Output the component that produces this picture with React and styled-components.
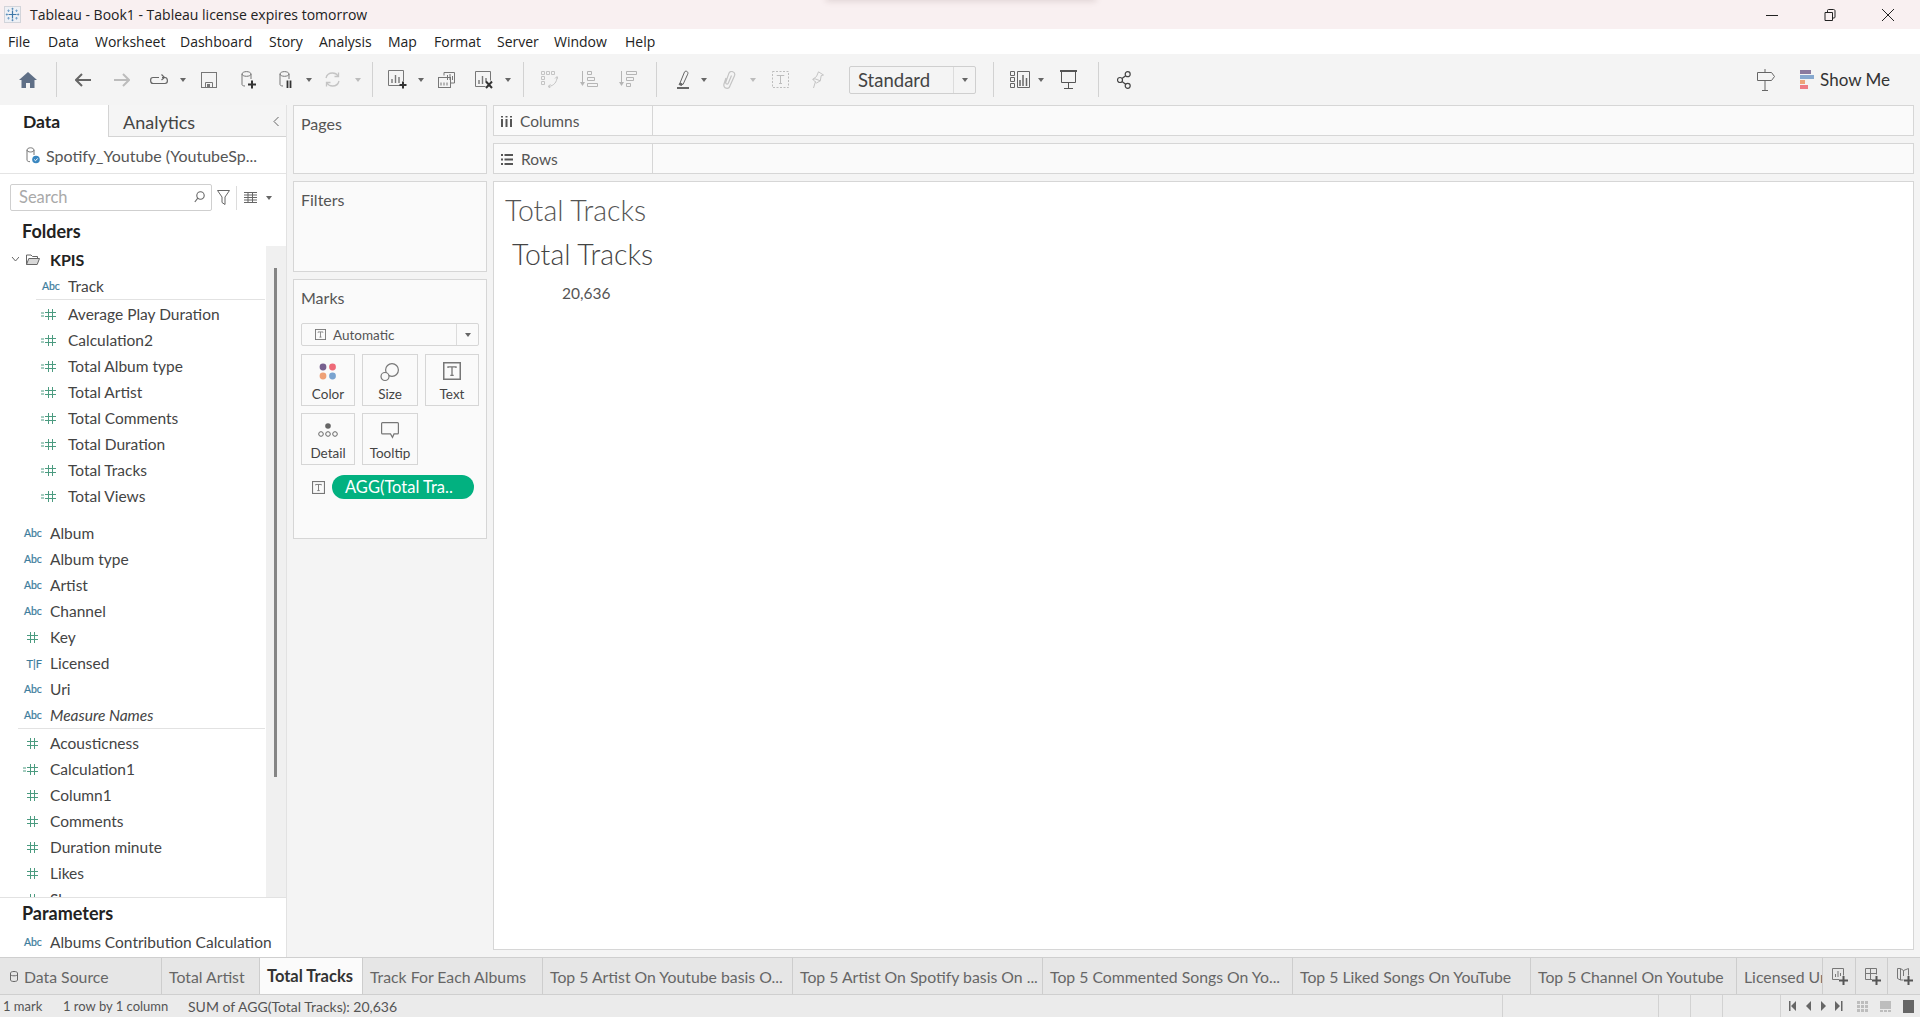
import React from 'react';
import styled, { createGlobalStyle } from 'styled-components';

const GlobalStyle = createGlobalStyle`
  html, body {
    margin: 0;
    height: 100%;
    overflow: hidden;
    background: #f4f4f4;
  }
  #root {
    height: 100%;
  }
  * {
    box-sizing: border-box;
  }
`;

const TABLEAU_FONT = `Lato, "Open Sans", sans-serif`;
const WINDOWS_FONT = `"Open Sans", "Noto Sans", sans-serif`;

const Page = styled.div`
  height: 100vh;
  display: flex;
  flex-direction: column;
  font-family: ${TABLEAU_FONT};
  color: #444;
`;

const TitleBar = styled.div`
  position: relative;
  flex: 0 0 29px;
  background: #f9f0f1;
  display: flex;
  align-items: center;
  padding-left: 4px;
  font-family: ${WINDOWS_FONT};
  font-size: 14px;
  color: #222;
`;

const TitleText = styled.span`
  margin-left: 9px;
`;

const TitleShadow = styled.div`
  position: absolute;
  top: -6px;
  left: 826px;
  width: 270px;
  height: 6px;
  box-shadow: 0 1px 6px rgba(120, 90, 90, 0.22);
`;

const WindowControls = styled.div`
  margin-left: auto;
  padding-right: 3px;
  display: flex;
  align-items: center;
`;

const WindowButton = styled.span`
  width: 58px;
  display: flex;
  justify-content: center;
`;

const MenuBar = styled.div`
  flex: 0 0 25px;
  background: #fff;
  display: flex;
  align-items: center;
  font-family: ${WINDOWS_FONT};
  font-size: 14px;
  color: #222;
`;

const MenuItem = styled.span`
  width: ${p => p.$w}px;
  padding-left: 8px;
`;

const Toolbar = styled.div`
  flex: 0 0 51px;
  background: #f4f4f4;
  display: flex;
  align-items: center;
`;

const ToolIcon = styled.svg`
  flex: none;
  margin-left: ${p => p.$ml || 0}px;
  display: block;
`;

const SignpostSvg = styled(ToolIcon)`
  margin-left: auto;
`;

const ToolSep = styled.div`
  flex: none;
  width: 1px;
  height: 35px;
  background: #d2d2d2;
  margin-left: ${p => p.$ml}px;
`;

const Combo = styled.div`
  flex: none;
  margin-left: 25px;
  width: 127px;
  height: 28px;
  border: 1px solid #cfcfcf;
  border-radius: 2px;
  display: flex;
  align-items: center;
  font-size: 18.5px;
  color: #444;
`;

const ComboLabel = styled.span`
  flex: 1;
  padding-left: 8px;
`;

const ComboArrow = styled.span`
  flex: 0 0 22px;
  height: 100%;
  border-left: 1px solid #dcdcdc;
  display: flex;
  align-items: center;
  justify-content: center;
`;

const ShowMe = styled.div`
  margin-left: 25px;
  margin-right: 30px;
  display: flex;
  align-items: center;
  gap: 6px;
  font-size: 17px;
  color: #333;
`;

const Workspace = styled.div`
  flex: 1;
  min-height: 0;
  display: flex;
  background: #f4f4f4;
`;

const DataPane = styled.div`
  flex: 0 0 287px;
  display: flex;
  flex-direction: column;
  background: #fff;
  border-right: 1px solid #e2e2e2;
  min-height: 0;
`;

const PaneTabs = styled.div`
  flex: 0 0 32px;
  display: flex;
`;

const DataTab = styled.div`
  flex: 0 0 108px;
  padding-left: 23px;
  display: flex;
  align-items: center;
  font-size: 17.5px;
  font-weight: 700;
  color: #222;
`;

const AnalyticsTab = styled.div`
  flex: 1;
  padding: 2px 6px 0 14px;
  display: flex;
  align-items: center;
  justify-content: space-between;
  font-size: 18px;
  color: #444;
  background: #f5f5f5;
  border-left: 1px solid #d4d4d4;
  border-bottom: 1px solid #d4d4d4;
`;

const SourceRow = styled.div`
  flex: 0 0 37px;
  display: flex;
  align-items: center;
  padding-left: 26px;
  gap: 6px;
  font-size: 16px;
  color: #555;
  border-bottom: 1px solid #e4e4e4;
`;

const SearchRow = styled.div`
  flex: 0 0 47px;
  display: flex;
  align-items: flex-start;
  padding: 10px 0 0 10px;
`;

const SearchBox = styled.div`
  flex: 0 0 202px;
  height: 27px;
  border: 1px solid #cfcfcf;
  border-radius: 2px;
  display: flex;
  align-items: center;
  justify-content: space-between;
  padding: 0 6px 1px 8px;
  font-size: 16.5px;
  color: #a9a9a9;
`;

const SearchTools = styled.div`
  height: 27px;
  display: flex;
  align-items: center;
`;

const ToolDivider = styled.span`
  width: 1px;
  height: 24px;
  background: #dcdcdc;
  margin: 0 7px 0 6px;
`;

const SectionTitle = styled.div`
  font-size: 18px;
  font-weight: 700;
  color: #222;
  padding-left: 22px;
  height: ${p => p.$h}px;
  line-height: ${p => p.$h}px;
  flex: none;
`;

const FieldScroller = styled.div`
  position: relative;
  flex: 1;
  min-height: 0;
  margin-top: 5px;
  overflow: hidden;
`;

const ScrollTrack = styled.div`
  position: absolute;
  top: 0;
  right: 0;
  bottom: 0;
  width: 20px;
  background: #f0f0f0;
`;

const ScrollThumb = styled.div`
  position: absolute;
  top: 22px;
  left: 8px;
  width: 3px;
  height: 509px;
  background: #858585;
`;

const FolderRow = styled.div`
  height: 26px;
  display: flex;
  align-items: center;
  padding-left: 11px;
  font-size: 16px;
  font-weight: 700;
  color: #222;
`;

const FolderLabel = styled.span`
  margin-left: 10px;
`;

const Field = styled.div`
  height: 26px;
  width: 266px;
  display: flex;
  align-items: center;
  padding-left: ${p => (p.$nested ? 42 : 24)}px;
  padding-bottom: 2px;
  margin-top: ${p => (p.$first ? 2 : 0)}px;
  margin-bottom: ${p => (p.$divider ? 2 : 0)}px;
  position: relative;
  font-size: 15.5px;
  color: #444;
  font-style: ${p => (p.$italic ? 'italic' : 'normal')};
  white-space: nowrap;

  ${p =>
    p.$divider &&
    `&::after {
      content: '';
      position: absolute;
      left: ${p.$nested ? 36 : 18}px;
      right: 1px;
      bottom: 0;
      height: 1px;
      background: #e2e2e2;
    }`}
`;

const ParameterField = styled(Field)`
  margin-top: 6px;
`;

const FieldGlyph = styled.span`
  flex: 0 0 26px;
  display: flex;
  align-items: center;
  font-style: normal;
  font-size: ${p => (p.$bool ? 11 : 10.5)}px;
  font-weight: 400;
  letter-spacing: ${p => (p.$bool ? 0 : -0.1)}px;
  color: #3c7c9c;
  -webkit-text-stroke: 0.2px #3c7c9c;
`;

const FieldGroupGap = styled.div`
  height: 11px;
`;

const ParameterBlock = styled.div`
  flex: 0 0 60px;
  border-top: 1px solid #e2e2e2;
  padding-top: 4px;
`;

const ShelfColumn = styled.div`
  flex: 0 0 194px;
  margin-left: 6px;
  display: flex;
  flex-direction: column;
  gap: 7px;
`;

const Card = styled.div`
  flex: 0 0 ${p => p.$h}px;
  background: #fafafa;
  border: 1px solid #d6d6d6;
  padding: 8px 7px 0;
  font-size: 16px;
  color: #555;
`;

const MarkType = styled.div`
  margin-top: 16px;
  height: 23px;
  border: 1px solid #d6d6d6;
  border-radius: 2px;
  display: flex;
  align-items: center;
  font-size: 13.5px;
`;

const MarkTypeLabel = styled.span`
  flex: 1;
  display: flex;
  align-items: center;
  gap: 7px;
  padding-left: 13px;
`;

const MarkTypeArrow = styled.span`
  flex: 0 0 22px;
  height: 100%;
  border-left: 1px solid #dcdcdc;
  display: flex;
  align-items: center;
  justify-content: center;
`;

const MarkGrid = styled.div`
  margin-top: 8px;
  display: grid;
  grid-template-columns: 54px 56px 54px;
  grid-auto-rows: 52px;
  gap: 7px;
`;

const MarkButton = styled.div`
  border: 1px solid #d6d6d6;
  display: flex;
  flex-direction: column;
  align-items: center;
  padding-top: 7px;
  font-size: 13.5px;
  color: #444;
`;

const MarkIcon = styled.svg`
  display: block;
  height: 20px;
  margin-bottom: 4px;
`;

const MarkIconBox = styled.span`
  display: flex;
  height: 20px;
  margin-bottom: 4px;
`;

const PillRow = styled.div`
  margin-top: 10px;
  display: flex;
  align-items: center;
  padding-left: 11px;
  gap: 7px;
`;

const Pill = styled.div`
  flex: 0 0 142px;
  height: 24px;
  border-radius: 12px;
  background: #02b180;
  color: #fff;
  font-size: 16.5px;
  line-height: 24px;
  padding-left: 13px;
  white-space: nowrap;
`;

const MainColumn = styled.div`
  flex: 1;
  margin: 0 6px 7px 6px;
  display: flex;
  flex-direction: column;
  gap: 7px;
  min-width: 0;
`;

const ShelfRow = styled.div`
  flex: 0 0 31px;
  background: #fafafa;
  border: 1px solid #d6d6d6;
  display: flex;
`;

const ShelfLabel = styled.div`
  flex: 0 0 159px;
  border-right: 1px solid #d6d6d6;
  display: flex;
  align-items: center;
  gap: 8px;
  padding: 1px 0 0 7px;
  font-size: 15.5px;
  color: #555;
`;

const VizCard = styled.div`
  flex: 1;
  background: #fff;
  border: 1px solid #d6d6d6;
  padding: 11px 11px;
  color: #555;
`;

const VizTitle = styled.div`
  font-size: 28.5px;
  line-height: 34px;
  font-weight: 300;
  color: #555;
`;

const VizHeader = styled.div`
  margin: 10px 0 0 7px;
  font-size: 28.5px;
  line-height: 34px;
  font-weight: 300;
  color: #444;
`;

const VizValue = styled.div`
  margin: 13px 0 0 57px;
  font-size: 15.5px;
  line-height: 18px;
  color: #555;
`;

const TabBar = styled.div`
  flex: 0 0 38px;
  display: flex;
  background: #e6e6e6;
  border-top: 1px solid #cfcfcf;
  border-bottom: 1px solid #cfcfcf;
  overflow: hidden;
`;

const SheetTab = styled.div`
  flex: 0 0 ${p => p.$w}px;
  display: flex;
  align-items: center;
  gap: 6px;
  padding-left: ${p => p.$pad || 7}px;
  border-right: 1px solid #cdcdcd;
  font-size: ${p => (p.$active ? 16.5 : 15.8)}px;
  white-space: nowrap;
  overflow: hidden;
  background: ${p => (p.$active ? '#fbfbfb' : 'transparent')};
  color: ${p => (p.$active ? '#333' : '#666')};
  font-weight: ${p => (p.$active ? 700 : 400)};
`;

const AddSheetButton = styled.div`
  flex: 1;
  display: flex;
  align-items: center;
  justify-content: center;
  padding-left: 4px;
  border-right: 1px solid #cdcdcd;
  &:last-child {
    border-right: none;
  }
`;

const StatusBar = styled.div`
  flex: 0 0 22px;
  background: #ebebeb;
  display: flex;
  font-size: 13px;
  color: #555;
`;

const StatusMain = styled.div`
  flex: 0 0 1502px;
  display: flex;
  align-items: center;
  padding-left: 3px;
  white-space: nowrap;
`;

const StatusText = styled.span`
  width: ${p => p.$w}px;
  font-size: ${p => p.$size || 13}px;
`;

const StatusCell = styled.div`
  flex: 0 0 ${p => p.$w}px;
  border-left: ${p => (p.$open ? 'none' : '1px solid #d2d2d2')};
  display: flex;
  align-items: center;
  justify-content: space-between;
  padding: 0 ${p => p.$pad || 0}px;
`;

const Caret = ({ ml, color = '#666' }) => (
  <ToolIcon $ml={ml} width="6" height="4" viewBox="0 0 6 4">
    <path d="M0 0h6L3 4z" fill={color} />
  </ToolIcon>
);

const TableauLogo = () => (
  <svg width="17" height="17" viewBox="0 0 17 17">
    <rect x="0.5" y="0.5" width="16" height="16" fill="#eef0f5" stroke="#d2d4da" />
    <path d="M8.5 4.500v8M4.500 8.500h8" stroke="#3f78a8" strokeWidth="1.200" />
    <path d="M8.500 1.800v2M7.500 2.800h2M8.500 13.200v2M7.500 14.200h2M2.800 7.500v2M1.800 8.500h2M14.200 7.500v2M13.200 8.500h2" stroke="#5d8fbb" />
    <path d="M4.500 3.500v2.500M3.300 4.700h2.400M12.500 3.500v2.500M11.300 4.700h2.400M4.500 11v2.500M3.300 12.200h2.400M12.500 11v2.500M11.300 12.200h2.400" stroke="#7aa6cc" />
  </svg>
);

const WindowIcon = ({ kind }) => (
  <svg width="14" height="14" viewBox="0 0 14 14" fill="none" stroke="#222" strokeWidth="1">
    {kind === 'min' && <path d="M1 7.500h12" />}
    {kind === 'max' && <path d="M2 4.500h7.500v8H2zM4.500 4.500V2.500c0-.6.4-1 1-1h5c1 0 1.500.6 1.500 1.500v6c0 .6-.4 1-1 1H9.500" />}
    {kind === 'close' && <path d="M1 1l12 12M13 1L1 13" />}
  </svg>
);

const HomeIcon = () => (
  <ToolIcon $ml={19} width="18" height="16" viewBox="0 0 18 16">
    <path d="M9 0L0 8h2.500v8h4.500v-5h4v5h4.500V8H18z" fill="#5f6f86" />
  </ToolIcon>
);

const ArrowLeft = ({ ml, color, flip }) => (
  <ToolIcon $ml={ml} width="16" height="14" viewBox="0 0 16 14" fill="none" stroke={color} strokeWidth="2">
    <path d={flip ? 'M0 7h15M9 1l6 6-6 6' : 'M16 7H1M7 1L1 7l6 6'} />
  </ToolIcon>
);

const LoopIcon = () => (
  <ToolIcon $ml={20} width="18" height="11" viewBox="0 0 18 11" fill="none" stroke="#666" strokeWidth="1.200">
    <path d="M9 3.500H3c-1.500 0-2.400 1-2.400 2.700S1.500 9.500 3 9.500h12c1.500 0 2.400-1 2.400-2.700 0-1.700-.9-3.300-2.400-3.300h-3" />
    <path d="M11.500 0.500l3 3-3 2.500" />
  </ToolIcon>
);

const SaveIcon = () => (
  <ToolIcon $ml={15} width="16" height="16" viewBox="0 0 16 16" fill="none" stroke="#777" strokeWidth="1">
    <rect x="0.500" y="0.500" width="15" height="15" />
    <path d="M4.500 15.500v-5h7v5" />
    <rect x="6" y="12" width="3" height="3" fill="#777" stroke="none" />
  </ToolIcon>
);

const DataBadgeIcon = ({ ml, w, pause }) => (
  <ToolIcon $ml={ml} width={w} height="18" viewBox={`0 0 ${w} 18`} fill="none">
    <path d="M1 3c0-1.300 2-2.400 4.500-2.400S10 1.700 10 3v5M1 3c0 1.300 2 2.300 4.500 2.300S10 4.300 10 3M1 3v10.500c0 .8 1 1.500 3 1.500" stroke="#777" strokeWidth="1" />
    {pause ? (
      <path d="M8.500 9.500v7.500M11.500 9.500v7.500" stroke="#333" strokeWidth="1.800" />
    ) : (
      <path d="M7 13.500h8M11 9.500v8" stroke="#333" strokeWidth="2" />
    )}
  </ToolIcon>
);

const RefreshIcon = () => (
  <ToolIcon $ml={12} width="17" height="17" viewBox="0 0 17 17" fill="none" stroke="#c4c4c4" strokeWidth="1.300">
    <path d="M2 7c.7-3 3.200-5 6.500-5 2.500 0 4.500 1.200 5.500 3M15 10c-.7 3-3.200 5-6.500 5-2.500 0-4.500-1.200-5.500-3" />
    <path d="M14.500 1.500v4h-4M2.500 15.500v-4h4" />
  </ToolIcon>
);

const NewSheetIcon = () => (
  <ToolIcon $ml={15} width="19" height="19" viewBox="0 0 19 19" fill="none">
    <path d="M12 15.500H.500V.500h15V11" stroke="#777" />
    <path d="M4 13V9M7.500 13V5M11 13V7" stroke="#777" strokeWidth="1.400" />
    <path d="M11.500 15h7M15 11.500v7" stroke="#333" strokeWidth="2" />
  </ToolIcon>
);

const DuplicateIcon = () => (
  <ToolIcon $ml={14} width="17" height="16" viewBox="0 0 17 16" fill="none" stroke="#777">
    <path d="M6 3.500V.500h10.500V11H13" />
    <rect x="0.500" y="5.500" width="12" height="10" />
    <path d="M9.500 8V3M12 8V2M14.500 8V4M3 13.500v-3M6 13.500v-3M9 13.500v-3" strokeWidth="1" />
  </ToolIcon>
);

const ClearIcon = () => (
  <ToolIcon $ml={20} width="18" height="18" viewBox="0 0 18 18" fill="none">
    <path d="M10.500 15.500H.500V.500h15v9" stroke="#777" />
    <path d="M4 13V9M7.500 13V5M11 11V7" stroke="#777" strokeWidth="1.400" />
    <path d="M11 10.500l6 6.500M17 10.500l-6 6.500" stroke="#333" strokeWidth="2" />
  </ToolIcon>
);

const SwapIcon = () => (
  <ToolIcon $ml={17} width="17" height="17" viewBox="0 0 17 17" fill="none" stroke="#c4c4c4">
    <path d="M.500.500h3v3h-3zM5.500.500h3v3h-3zM10.500.500h3v3h-3zM.500 5.500h3v3h-3zM.500 10.500h3v3h-3z" />
    <path d="M16 6c0 5-3 8.500-8 9.500M14 7.500l2-2 1 2.500M9.500 13.500L7 15.500l2.500 1.500" />
  </ToolIcon>
);

const SortIcon = ({ ml, desc }) => (
  <ToolIcon $ml={ml} width="18" height="17" viewBox="0 0 18 17" fill="none" stroke="#b5b5b5">
    <path d="M2.500 0v14" />
    <path d="M0 11h5l-2.500 4z" fill="#b5b5b5" stroke="none" />
    {desc ? (
      <path d="M7.500.500h10v3h-10zM7.500 6.500h7v3h-7zM7.500 12.500h4v3h-4z" />
    ) : (
      <path d="M7.500.500h4v3h-4zM7.500 6.500h7v3h-7zM7.500 12.500h10v3h-10z" />
    )}
  </ToolIcon>
);

const HighlighterIcon = () => (
  <ToolIcon $ml={20} width="12" height="19" viewBox="0 0 12 19" fill="none" stroke="#666">
    <path d="M3 13l4.500-11c.4-1 2-1 2.800-.3.800.7.700 1.800.4 2.500L6 14.500z" />
    <path d="M2 14.500l1-1.500 2.500 1.500-1 1z" fill="#666" />
    <rect x="0" y="17" width="12" height="2" fill="#666" stroke="none" />
  </ToolIcon>
);

const ClipIcon = () => (
  <ToolIcon $ml={16} width="13" height="18" viewBox="0 0 13 18" fill="none" stroke="#c4c4c4" strokeWidth="1.200">
    <path d="M3 7L1 13c-.6 2 .5 3.800 2.200 4.200s3.300-.6 3.800-2.400l4.500-10c.6-1.800 0-3.500-1.700-4.100S6.500.900 5.800 2.600L2.800 11c-.3 1 .1 1.800.9 2s1.500-.3 1.800-1.200l3-7.300" />
  </ToolIcon>
);

const TextBoxIcon = () => (
  <ToolIcon $ml={16} width="17" height="17" viewBox="0 0 17 17" fill="none" stroke="#bdbdbd">
    <rect x="0.500" y="0.500" width="16" height="16" strokeDasharray="2 1.500" />
    <path d="M5 5V4.500h7V5M8.500 4.500v8M7 12.500h3" />
  </ToolIcon>
);

const PinIcon = () => (
  <ToolIcon $ml={23} width="12" height="18" viewBox="0 0 12 18" fill="none" stroke="#c4c4c4">
    <path d="M6.500.800l5 3.200-2.300.6-.9 5.200L3 7.800l-2.300.6L4.500 5.500z" />
    <path d="M.800 8.400l3.700 3.600 3.800-2.200M3.500 10.500L1.500 17" />
  </ToolIcon>
);

const ChartTypeIcon = () => (
  <ToolIcon $ml={16} width="20" height="17" viewBox="0 0 20 17" fill="none" stroke="#666">
    <path d="M.500.500h4v4h-4zM.500 6.500h4v4h-4zM.500 12.500h4v4h-4zM7.500.500h12v16h-12z" />
    <path d="M10 15V9M13 15V4M16.500 15V7" strokeWidth="1.500" />
  </ToolIcon>
);

const PresentationIcon = () => (
  <ToolIcon $ml={16} width="17" height="19" viewBox="0 0 17 19" fill="none" stroke="#555">
    <path d="M0 1h17" strokeWidth="2" />
    <path d="M1.500 1.500v11h14v-11M8.500 12.500v5.500M4 18.500h9" />
  </ToolIcon>
);

const ShareIcon = () => (
  <ToolIcon $ml={18} width="14" height="18" viewBox="0 0 14 18" fill="none" stroke="#444" strokeWidth="1.200">
    <circle cx="10.700" cy="3.200" r="2.500" />
    <circle cx="3" cy="9" r="2.500" />
    <circle cx="10.700" cy="14.800" r="2.500" />
    <path d="M5 7.500l3.700-2.800M5 10.500l3.700 2.800" />
  </ToolIcon>
);

const SignpostIcon = () => (
  <SignpostSvg width="18" height="22" viewBox="0 0 18 22" fill="none" stroke="#666">
    <path d="M.500 3.500h14l3 4-3 4H.500zM8 0v3.500M8 11.500V21M5 21.500h6" />
  </SignpostSvg>
);

const ShowMeIcon = () => (
  <svg width="14" height="19" viewBox="0 0 14 19">
    <rect width="11" height="4" fill="#8a7a9f" />
    <rect y="5" width="14" height="4" fill="#86a8cf" />
    <rect y="10" width="5" height="4" fill="#eda47a" />
    <rect y="15" width="8" height="4" fill="#ee7c85" />
  </svg>
);

const Chevron = ({ dir = 'left', color = '#666' }) => (
  <ToolIcon width="8" height="11" viewBox="0 0 8 11" fill="none" stroke={color}>
    <path d={dir === 'left' ? 'M6.500 1L2 5.500l4.500 4.500' : 'M1 3l3.500 4L8 3'} />
  </ToolIcon>
);

const DataSourceIcon = () => (
  <ToolIcon width="14" height="17" viewBox="0 0 14 17" fill="none">
    <path d="M1 3c0-1.200 1.600-2.200 3.500-2.200S8 1.800 8 3v5M1 3c0 1.200 1.600 2 3.500 2S8 4.200 8 3M1 3v10c0 1 1.200 1.700 3 1.700" stroke="#777" />
    <circle cx="10" cy="12.500" r="3.800" fill="#3a87c0" />
    <path d="M8.200 12.500l1.300 1.300 2.200-2.400" stroke="#fff" />
  </ToolIcon>
);

const SearchIcon = () => (
  <svg width="11" height="12" viewBox="0 0 11 12" fill="none" stroke="#666" strokeWidth="1.100">
    <circle cx="6.500" cy="4.500" r="3.700" />
    <path d="M3.800 7.200L.8 11" />
  </svg>
);

const FilterIcon = () => (
  <ToolIcon $ml={5} width="13" height="15" viewBox="0 0 13 15" fill="none" stroke="#666">
    <path d="M.500.500h12L8 7v7.500l-3-2V7z" />
  </ToolIcon>
);

const GridListIcon = () => (
  <ToolIcon width="13" height="11" viewBox="0 0 13 11" fill="#666">
    <path d="M0 0h13v1H0zM0 2.500h13v1H0zM0 5h13v1H0zM0 7.500h13v1H0zM0 10h13v1H0zM3.500 0h1v11h-1zM8 0h1v11H8z" />
  </ToolIcon>
);

const FolderOpenIcon = () => (
  <ToolIcon $ml={7} width="14" height="11" viewBox="0 0 14 11" fill="none" stroke="#666">
    <path d="M.500 10.500V1h4.500l1.500 1.500h5V4.500" />
    <path d="M.500 10.500l2.300-6h10.700l-2.300 6z" fill="#d8d8d8" />
  </ToolIcon>
);

const HashSvg = styled.svg`
  flex: none;
  margin-left: ${p => (p.$calc ? -1 : 3)}px;
`;

const HashGlyph = ({ calc }) => (
  <HashSvg
    $calc={calc}
    width={calc ? 15 : 11}
    height="11"
    viewBox={calc ? '0 0 15 11' : '0 0 11 11'}
    fill="none"
    stroke="#4b9b80"
  >
    <g transform={calc ? 'translate(4 0)' : undefined}>
      <path d="M3.500 0v11M7.500 0v11M0 3.500h11M0 7.500h11" />
    </g>
    {calc && <path d="M0 4h3M0 7h3" />}
  </HashSvg>
);

const FieldIcon = ({ type }) => {
  if (type === 'abc') return <FieldGlyph>Abc</FieldGlyph>;
  if (type === 'bool') return <FieldGlyph $bool>&nbsp;T|F</FieldGlyph>;
  return (
    <FieldGlyph>
      <HashGlyph calc={type === 'calc'} />
    </FieldGlyph>
  );
};

const TextMarkIcon = ({ size = 18 }) => (
  <ToolIcon width={size} height={size} viewBox="0 0 18 18" fill="none" stroke="#777">
    <rect x="0.750" y="0.750" width="16.500" height="16.500" strokeWidth="1.500" />
    <path d="M5 6V4.800h8V6M9 4.800v8.500M7.300 13.300h3.400" strokeWidth="1.300" />
  </ToolIcon>
);

const AddDashIcon = ({ kind }) => (
  <svg width="18" height="18" viewBox="0 0 18 18" fill="none" stroke="#777">
    {kind === 'sheet' && <path d="M.500 1.500h11v7M.500 1.500v11H7M3.500 10V7M6 10V4M8.500 9V6" />}
    {kind === 'dash' && <path d="M.500 1.500h11v6M.500 1.500v11H7M.500 6.500h11M5.500 1.500v11" />}
    {kind === 'story' && <path d="M.500 1.500h3l3 2 5-2v7M.500 1.500v10l3 1.500h3M3.500 1.500v11.500M6.500 3.500V9" />}
    <path d="M7 13.500h9M11.500 9v9" stroke="#555" strokeWidth="2" />
  </svg>
);

const NavIcon = ({ d }) => (
  <svg width="8" height="10" viewBox="0 0 8 10" fill="#666">
    <path d={d} />
  </svg>
);

const ViewDots = () => (
  <svg width="11" height="11" viewBox="0 0 11 11" fill="#bdbdbd">
    <path d="M0 0h3v3H0zM4 0h3v3H4zM8 0h3v3H8zM0 4h3v3H0zM4 4h3v3H4zM8 4h3v3H8zM0 8h3v3H0zM4 8h3v3H4zM8 8h3v3H8z" />
  </svg>
);

const ViewMid = () => (
  <svg width="11" height="11" viewBox="0 0 11 11" fill="#bdbdbd">
    <path d="M0 0h11v8H0zM0 9h3v2H0zM4 9h3v2H4zM8 9h3v2H8z" />
  </svg>
);

const ViewFull = () => (
  <svg width="11" height="13" viewBox="0 0 11 13" fill="#666">
    <path d="M0 0h11v13H0z" />
  </svg>
);

const menus = [
  ['File', 40], ['Data', 47], ['Worksheet', 85], ['Dashboard', 89], ['Story', 50],
  ['Analysis', 69], ['Map', 46], ['Format', 63], ['Server', 57], ['Window', 71], ['Help', 50],
];

const kpiFields = [
  ['calc', 'Average Play Duration'], ['calc', 'Calculation2'], ['calc', 'Total Album type'],
  ['calc', 'Total Artist'], ['calc', 'Total Comments'], ['calc', 'Total Duration'],
  ['calc', 'Total Tracks'], ['calc', 'Total Views'],
];

const dimensions = [
  ['abc', 'Album'], ['abc', 'Album type'], ['abc', 'Artist'], ['abc', 'Channel'],
  ['hash', 'Key'], ['bool', 'Licensed'], ['abc', 'Uri'],
];

const measures = [
  ['hash', 'Acousticness'], ['calc', 'Calculation1'], ['hash', 'Column1'], ['hash', 'Comments'],
  ['hash', 'Duration minute'], ['hash', 'Likes'], ['hash', 'Shares'],
];

const tabs = [
  ['Total Artist', 98],
  ['Total Tracks', 103, true],
  ['Track For Each Albums', 180],
  ['Top 5 Artist On Youtube basis O...', 250],
  ['Top 5 Artist On Spotify basis On ...', 250],
  ['Top 5 Commented Songs On Yo...', 250],
  ['Top 5 Liked Songs On YouTube', 238],
  ['Top 5 Channel On Youtube', 206],
  ['Licensed Ur', 86],
];

const App = () => {
  return (
    <Page>
      <GlobalStyle />

      <TitleBar>
        <TitleShadow />
        <TableauLogo />
        <TitleText>Tableau - Book1 - Tableau license expires tomorrow</TitleText>
        <WindowControls>
          <WindowButton><WindowIcon kind="min" /></WindowButton>
          <WindowButton><WindowIcon kind="max" /></WindowButton>
          <WindowButton><WindowIcon kind="close" /></WindowButton>
        </WindowControls>
      </TitleBar>

      <MenuBar>
        {menus.map(([name, w]) => (
          <MenuItem key={name} $w={w}>{name}</MenuItem>
        ))}
      </MenuBar>

      <Toolbar>
        <HomeIcon />
        <ToolSep $ml={19} />
        <ArrowLeft ml={18} color="#666" />
        <ArrowLeft ml={23} color="#bcbcbc" flip />
        <LoopIcon />
        <Caret ml={12} />
        <SaveIcon />
        <DataBadgeIcon ml={24} w={16} />
        <DataBadgeIcon ml={22} w={14} pause />
        <Caret ml={13} />
        <RefreshIcon />
        <Caret ml={14} color="#bcbcbc" />
        <ToolSep $ml={11} />
        <NewSheetIcon />
        <Caret ml={11} />
        <DuplicateIcon />
        <ClearIcon />
        <Caret ml={12} />
        <ToolSep $ml={12} />
        <SwapIcon />
        <SortIcon ml={22} />
        <SortIcon ml={21} desc />
        <ToolSep $ml={19} />
        <HighlighterIcon />
        <Caret ml={12} />
        <ClipIcon />
        <Caret ml={14} color="#bcbcbc" />
        <TextBoxIcon />
        <PinIcon />
        <Combo>
          <ComboLabel>Standard</ComboLabel>
          <ComboArrow><Caret ml={0} /></ComboArrow>
        </Combo>
        <ToolSep $ml={17} />
        <ChartTypeIcon />
        <Caret ml={8} />
        <PresentationIcon />
        <ToolSep $ml={21} />
        <ShareIcon />
        <SignpostIcon />
        <ShowMe>
          <ShowMeIcon />
          Show Me
        </ShowMe>
      </Toolbar>

      <Workspace>
        <DataPane>
          <PaneTabs>
            <DataTab>Data</DataTab>
            <AnalyticsTab>
              Analytics
              <Chevron />
            </AnalyticsTab>
          </PaneTabs>
          <SourceRow>
            <DataSourceIcon />
            Spotify_Youtube (YoutubeSp...
          </SourceRow>
          <SearchRow>
            <SearchBox>
              Search
              <SearchIcon />
            </SearchBox>
            <SearchTools>
              <FilterIcon />
              <ToolDivider />
              <GridListIcon />
              <Caret ml={9} />
            </SearchTools>
          </SearchRow>
          <SectionTitle $h={20}>Folders</SectionTitle>
          <FieldScroller>
            <ScrollTrack><ScrollThumb /></ScrollTrack>
            <FolderRow>
              <Chevron dir="down" />
              <FolderOpenIcon />
              <FolderLabel>KPIS</FolderLabel>
            </FolderRow>
            <Field $nested $first $divider>
              <FieldIcon type="abc" />
              Track
            </Field>
            {kpiFields.map(([type, name]) => (
              <Field key={name} $nested>
                <FieldIcon type={type} />
                {name}
              </Field>
            ))}
            <FieldGroupGap />
            {dimensions.map(([type, name]) => (
              <Field key={name}>
                <FieldIcon type={type} />
                {name}
              </Field>
            ))}
            <Field $italic $divider>
              <FieldIcon type="abc" />
              Measure Names
            </Field>
            {measures.map(([type, name]) => (
              <Field key={name}>
                <FieldIcon type={type} />
                {name}
              </Field>
            ))}
          </FieldScroller>
          <ParameterBlock>
            <SectionTitle $h={22}>Parameters</SectionTitle>
            <ParameterField>
              <FieldIcon type="abc" />
              Albums Contribution Calculation
            </ParameterField>
          </ParameterBlock>
        </DataPane>

        <ShelfColumn>
          <Card $h={69}>Pages</Card>
          <Card $h={91}>Filters</Card>
          <Card $h={260}>
            Marks
            <MarkType>
              <MarkTypeLabel>
                <TextMarkIcon size={11} />
                Automatic
              </MarkTypeLabel>
              <MarkTypeArrow><Caret ml={0} /></MarkTypeArrow>
            </MarkType>
            <MarkGrid>
              <MarkButton>
                <MarkIcon width="18" viewBox="0 0 18 18">
                  <circle cx="4" cy="4" r="3.400" fill="#77608f" />
                  <circle cx="13.500" cy="4" r="3.400" fill="#ee6a78" />
                  <circle cx="4" cy="13" r="3.400" fill="#efa176" />
                  <circle cx="13.500" cy="13" r="3.400" fill="#79a3d0" />
                </MarkIcon>
                Color
              </MarkButton>
              <MarkButton>
                <MarkIcon width="20" viewBox="0 0 20 18" fill="none" stroke="#777" strokeWidth="1.200">
                  <circle cx="12" cy="7" r="6.400" />
                  <circle cx="5" cy="13.500" r="4" fill="#fafafa" />
                </MarkIcon>
                Size
              </MarkButton>
              <MarkButton>
                <MarkIconBox><TextMarkIcon /></MarkIconBox>
                Text
              </MarkButton>
              <MarkButton>
                <MarkIcon width="20" viewBox="0 0 20 18" fill="none" stroke="#666">
                  <circle cx="10" cy="4" r="2.800" fill="#666" stroke="none" />
                  <circle cx="3" cy="12" r="2.300" />
                  <circle cx="10" cy="12" r="2.300" />
                  <circle cx="17" cy="12" r="2.300" />
                </MarkIcon>
                Detail
              </MarkButton>
              <MarkButton>
                <MarkIcon width="18" viewBox="0 0 18 18" fill="none" stroke="#777" strokeWidth="1.200">
                  <path d="M.600 1.500c0-.5.400-.9.900-.9h15c.5 0 .9.400.9.900v9.500c0 .5-.4.900-.9.900h-3.500l-1.500 3.500-2-3.500H1.500c-.5 0-.9-.4-.9-.9z" />
                </MarkIcon>
                Tooltip
              </MarkButton>
            </MarkGrid>
            <PillRow>
              <TextMarkIcon size={13} />
              <Pill>AGG(Total Tra..</Pill>
            </PillRow>
          </Card>
        </ShelfColumn>

        <MainColumn>
          <ShelfRow>
            <ShelfLabel>
              <svg width="11" height="11" viewBox="0 0 11 11" fill="#555">
                <path d="M0 3h2v8H0zM4.500 3h2v8h-2zM9 3h2v8H9zM0 0h2v1.500H0zM4.500 0h2v1.500h-2zM9 0h2v1.500H9z" />
              </svg>
              Columns
            </ShelfLabel>
          </ShelfRow>
          <ShelfRow>
            <ShelfLabel>
              <svg width="12" height="11" viewBox="0 0 12 11" fill="#555">
                <path d="M0 0h2v2H0zM0 4.500h2v2H0zM0 9h2v2H0zM3.500 0H12v2H3.500zM3.500 4.500H12v2H3.500zM3.500 9H12v2H3.500z" />
              </svg>
              Rows
            </ShelfLabel>
          </ShelfRow>
          <VizCard>
            <VizTitle>Total Tracks</VizTitle>
            <VizHeader>Total Tracks</VizHeader>
            <VizValue>20,636</VizValue>
          </VizCard>
        </MainColumn>
      </Workspace>

      <TabBar>
        <SheetTab $w={162} $pad={10}>
          <ToolIcon width="8" height="11" viewBox="0 0 8 11" fill="none" stroke="#666">
            <path d="M.500 2c0-.8 1.500-1.500 3.500-1.500S7.500 1.200 7.500 2v7c0 .8-1.500 1.500-3.500 1.500S.500 9.800.500 9zM.500 3.500c0 .8 1.500 1.300 3.500 1.300s3.500-.5 3.500-1.300" />
          </ToolIcon>
          Data Source
        </SheetTab>
        {tabs.map(([name, w, active]) => (
          <SheetTab key={name} $w={w} $active={active}>{name}</SheetTab>
        ))}
        <AddSheetButton><AddDashIcon kind="sheet" /></AddSheetButton>
        <AddSheetButton><AddDashIcon kind="dash" /></AddSheetButton>
        <AddSheetButton><AddDashIcon kind="story" /></AddSheetButton>
      </TabBar>

      <StatusBar>
        <StatusMain>
          <StatusText $w={60}>1 mark</StatusText>
          <StatusText $w={125}>1 row by 1 column</StatusText>
          <StatusText $w={300} $size={14}>SUM of AGG(Total Tracks): 20,636</StatusText>
        </StatusMain>
        <StatusCell $w={156} />
        <StatusCell $w={32} />
        <StatusCell $w={32} />
        <StatusCell $w={58} />
        <StatusCell $w={71} $pad={8}>
          <NavIcon d="M0 0h1.500v10H0zM7 0v10L2 5z" />
          <NavIcon d="M7 0v10L2 5z" />
          <NavIcon d="M1 0v10l5-5z" />
          <NavIcon d="M0 0v10l5-5zM6 0h1.500v10H6z" />
        </StatusCell>
        <StatusCell $w={69} $pad={6} $open>
          <ViewDots />
          <ViewMid />
          <ViewFull />
        </StatusCell>
      </StatusBar>
    </Page>
  );
};

export default App;
